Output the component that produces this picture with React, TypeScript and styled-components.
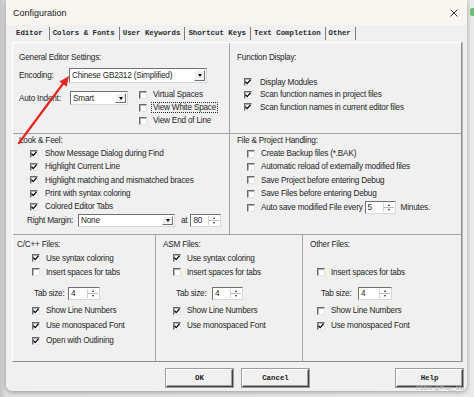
import React from "react";
import styled, { createGlobalStyle } from "styled-components";

const GlobalStyle = createGlobalStyle`
  html, body {
    margin: 0;
    padding: 0;
  }
  body {
    width: 474px;
    height: 397px;
    overflow: hidden;
    background: #e6e6e6;
    font-family: "Liberation Sans", Arial, sans-serif;
    font-size: 8.2px;
    letter-spacing: -0.2px;
    color: #262626;
  }
`;

const Desk = styled.div`
  position: relative;
  width: 474px;
  height: 397px;
  display: flex;
  align-items: flex-start;
  padding-left: 6px;
  box-sizing: border-box;
  background: linear-gradient(to right, #c4c4c4 0, #dedede 6px, #e9e9e9 100%);
`;

const Window = styled.div`
  width: 461px;
  height: 391px;
  background: #f0f0f0;
  border-radius: 0 0 6px 6px;
  box-shadow: 0 1px 4px rgba(0, 0, 0, 0.35);
  display: flex;
  flex-direction: column;
`;

const RightStrip = styled.div`
  flex: 1;
  height: 397px;
  display: flex;
  flex-direction: column;
  align-items: flex-end;
  padding-top: 8px;
  box-sizing: border-box;
`;

const GreenMark = styled.span`
  width: 4px;
  height: 8px;
  border-radius: 2px 0 0 2px;
  background: #6cc070;
`;

const TitleBar = styled.div`
  height: 25px;
  display: flex;
  align-items: center;
  justify-content: space-between;
  padding: 0 9px 0 7px;
  background: #f9f5f0;
  font-size: 9px;
  letter-spacing: 0;
  color: #1a1a1a;
`;

const TabStrip = styled.div`
  height: 17px;
  display: flex;
  align-items: center;
  padding-left: 7px;
`;

const Tab = styled.div<{ $active?: boolean }>`
  height: 13px;
  line-height: 13px;
  padding: 0 ${(p) => (p.$active ? 6 : 4)}px 0 3px;
  border-right: 1px solid #7c7c7c;
  font-family: "Liberation Mono", "Courier New", monospace;
  font-weight: bold;
  font-size: 7.4px;
  letter-spacing: 0;
  color: #2a2a2a;
  white-space: nowrap;
`;

const Panel = styled.div`
  height: 320px;
  margin: 0 5px 0 6px;
  box-sizing: border-box;
  border: 1px solid;
  border-color: #ffffff #8e8e8e #8e8e8e #ffffff;
  box-shadow: 1px 0 0 #b4b4b4;
  display: flex;
  flex-direction: column;
`;

const TopGrid = styled.div`
  display: grid;
  grid-template-columns: 217px 1fr;
  grid-template-rows: 91px 101px;
`;

const BottomGrid = styled.div`
  flex: 1;
  display: grid;
  grid-template-columns: 143px 147px 1fr;
`;

const Section = styled.div<{ $pl: number; $pt: number; $br?: boolean; $bb?: boolean }>`
  box-sizing: border-box;
  padding: ${(p) => p.$pt}px 0 0 ${(p) => p.$pl}px;
  border-right: ${(p) => (p.$br ? "1px solid #a3a3a3" : "none")};
  border-bottom: ${(p) => (p.$bb ? "1px solid #a3a3a3" : "none")};
  display: flex;
  flex-direction: column;
  white-space: nowrap;
`;

const Heading = styled.div`
  line-height: 13px;
  height: 13px;
`;

const Row = styled.div<{ $h: number; $mt?: number; $ml?: number }>`
  display: flex;
  align-items: center;
  height: ${(p) => p.$h}px;
  margin-top: ${(p) => p.$mt ?? 0}px;
  margin-left: ${(p) => p.$ml ?? 0}px;
`;

const Label = styled.span<{ $w?: number; $ml?: number; $mr?: number }>`
  display: inline-block;
  width: ${(p) => (p.$w ? `${p.$w}px` : "auto")};
  margin-left: ${(p) => p.$ml ?? 0}px;
  margin-right: ${(p) => p.$mr ?? 0}px;
  line-height: 13px;
  white-space: nowrap;
`;

const CheckRow = styled.div<{ $indent: number; $h: number; $gap: number }>`
  display: flex;
  align-items: center;
  height: ${(p) => p.$h}px;
  padding-left: ${(p) => p.$indent}px;
  gap: ${(p) => p.$gap}px;
`;

const Box = styled.span`
  width: 8px;
  height: 8px;
  flex: none;
  box-sizing: border-box;
  background: #fff;
  border: 1px solid;
  border-color: #6a6a6a #e4e4e4 #e4e4e4 #6a6a6a;
  box-shadow: inset 1px 1px 0 #b0b0b0;
  display: flex;
  align-items: center;
  justify-content: center;
`;

const CheckText = styled.span<{ $focus?: boolean }>`
  line-height: 9px;
  padding: 0 1px;
  margin-left: ${(p) => (p.$focus ? -1 : 0)}px;
  border: ${(p) => (p.$focus ? "1px dotted #2a2a2a" : "none")};
`;

const Field = styled.div<{ $w: number; $h: number; $ml?: number }>`
  width: ${(p) => p.$w}px;
  height: ${(p) => p.$h}px;
  margin-left: ${(p) => p.$ml ?? 0}px;
  flex: none;
  box-sizing: border-box;
  background: #fff;
  border: 1px solid;
  border-color: #707070 #d8d8d8 #d8d8d8 #707070;
  display: flex;
  align-items: stretch;
`;

const FieldText = styled.span`
  flex: 1;
  padding-left: 2px;
  display: flex;
  align-items: center;
  overflow: hidden;
`;

const DropBtn = styled.span`
  width: 11px;
  margin: 1px;
  box-sizing: border-box;
  background: #f0f0f0;
  border: 1px solid;
  border-color: #ffffff #707070 #707070 #ffffff;
  display: flex;
  align-items: center;
  justify-content: center;
`;

const DownTri = styled.span`
  width: 0;
  height: 0;
  border-left: 2.5px solid transparent;
  border-right: 2.5px solid transparent;
  border-top: 3px solid #000;
`;

const SpinBtns = styled.span`
  width: 10px;
  margin: 1px 1px 1px 2px;
  display: flex;
  flex-direction: column;
  border-left: 1px solid #d0d0d0;
`;

const SpinHalf = styled.span<{ $up?: boolean }>`
  flex: 1;
  display: flex;
  align-items: center;
  justify-content: center;
  border-bottom: ${(p) => (p.$up ? "1px solid #b8b8b8" : "none")};
`;

const SpinTri = styled.span<{ $up?: boolean }>`
  width: 0;
  height: 0;
  border-left: 1.5px solid transparent;
  border-right: 1.5px solid transparent;
  border-top: ${(p) => (p.$up ? "none" : "2px solid #222")};
  border-bottom: ${(p) => (p.$up ? "2px solid #222" : "none")};
`;

const Column = styled.div<{ $mt?: number; $ml?: number }>`
  display: flex;
  flex-direction: column;
  margin-top: ${(p) => p.$mt ?? 0}px;
  margin-left: ${(p) => p.$ml ?? 0}px;
`;

const ButtonRow = styled.div`
  flex: 1;
  display: flex;
  align-items: flex-start;
  padding: 7px 4px 0 160px;
  gap: 9px;
`;

const Button = styled.button<{ $push?: boolean }>`
  width: 67px;
  height: 18px;
  margin-left: ${(p) => (p.$push ? "auto" : "0")};
  box-sizing: border-box;
  padding: 0;
  background: #f0f0f0;
  border: 1px solid;
  border-color: #ffffff #404040 #404040 #ffffff;
  box-shadow: inset -1px -1px 0 #a0a0a0, 0 0 0 1px #9c9c9c;
  font-family: "Liberation Mono", "Courier New", monospace;
  font-weight: bold;
  font-size: 7.4px;
  letter-spacing: 0;
  color: #222;
`;

const Arrow = styled.svg`
  position: absolute;
  left: 0;
  top: 0;
  pointer-events: none;
`;

const Watermark = styled.span`
  position: absolute;
  right: 10px;
  top: 385px;
  font-size: 6px;
  letter-spacing: 0;
  color: #b9b9b9;
`;

const Check: React.FC<{
  checked?: boolean;
  indent: number;
  h: number;
  gap: number;
  focus?: boolean;
  children?: React.ReactNode;
}> = ({ checked, indent, h, gap, focus, children }) => (
  <CheckRow $indent={indent} $h={h} $gap={gap}>
    <Box>
      {checked && (
        <svg width="6" height="6" viewBox="0 0 6 6">
          <path d="M0.5 2.6 L2.2 4.6 L5.6 0.8" stroke="#000" strokeWidth="1.3" fill="none" />
        </svg>
      )}
    </Box>
    <CheckText $focus={focus}>{children}</CheckText>
  </CheckRow>
);

const Combo: React.FC<{ w: number; h: number; ml?: number; value: string }> = ({ w, h, ml, value }) => (
  <Field $w={w} $h={h} $ml={ml}>
    <FieldText>{value}</FieldText>
    <DropBtn>
      <DownTri />
    </DropBtn>
  </Field>
);

const Spinner: React.FC<{ w: number; h: number; ml?: number; value: string }> = ({ w, h, ml, value }) => (
  <Field $w={w} $h={h} $ml={ml}>
    <FieldText>{value}</FieldText>
    <SpinBtns>
      <SpinHalf $up>
        <SpinTri $up />
      </SpinHalf>
      <SpinHalf>
        <SpinTri />
      </SpinHalf>
    </SpinBtns>
  </Field>
);

const tabs = ["Editor", "Colors & Fonts", "User Keywords", "Shortcut Keys", "Text Completion", "Other"];

export default function App() {
  return (
    <Desk>
      <GlobalStyle />
      <Window>
        <TitleBar>
          <span>Configuration</span>
          <svg width="8" height="8" viewBox="0 0 8 8">
            <path d="M0.5 0.5 L7.5 7.5 M7.5 0.5 L0.5 7.5" stroke="#222" strokeWidth="0.9" />
          </svg>
        </TitleBar>
        <TabStrip>
          {tabs.map((t, i) => (
            <Tab key={t} $active={i === 0}>
              {t}
            </Tab>
          ))}
        </TabStrip>
        <Panel>
          <TopGrid>
            {/* General editor settings */}
            <Section $pl={6} $pt={8} $br $bb>
              <Heading>General Editor Settings:</Heading>
              <Row $h={15} $mt={4}>
                <Label $w={50}>Encoding:</Label>
                <Combo w={138} h={15} value="Chinese GB2312 (Simplified)" />
              </Row>
              <Row $h={40} $mt={5} style={{ alignItems: "flex-start" }}>
                <Label $w={51} style={{ marginTop: 4 }}>
                  Auto Indent:
                </Label>
                <Column $mt={3}>
                  <Combo w={58} h={14} value="Smart" />
                </Column>
                <Column $ml={11}>
                  <Check indent={0} h={13} gap={5}>
                    Virtual Spaces
                  </Check>
                  <Check indent={0} h={13} gap={5} focus>
                    View White Space
                  </Check>
                  <Check indent={0} h={13} gap={5}>
                    View End of Line
                  </Check>
                </Column>
              </Row>
            </Section>

            {/* Function display */}
            <Section $pl={7} $pt={8} $bb>
              <Heading>Function Display:</Heading>
              <Column $mt={12}>
                <Check checked indent={7} h={12.6} gap={7}>
                  Display Modules
                </Check>
                <Check checked indent={7} h={12.6} gap={7}>
                  Scan function names in project files
                </Check>
                <Check checked indent={7} h={12.6} gap={7}>
                  Scan function names in current editor files
                </Check>
              </Column>
            </Section>

            {/* Look & feel */}
            <Section $pl={6} $pt={0} $br $bb>
              <Heading>Look &amp; Feel:</Heading>
              <Check checked indent={11} h={13.3} gap={6}>
                Show Message Dialog during Find
              </Check>
              <Check checked indent={11} h={13.3} gap={6}>
                Highlight Current Line
              </Check>
              <Check checked indent={11} h={13.3} gap={6}>
                Highlight matching and mismatched braces
              </Check>
              <Check checked indent={11} h={13.3} gap={6}>
                Print with syntax coloring
              </Check>
              <Check checked indent={11} h={13.3} gap={6}>
                Colored Editor Tabs
              </Check>
              <Row $h={14}>
                <Label $w={51} $ml={8}>
                  Right Margin:
                </Label>
                <Combo w={97} h={13} value="None" />
                <Label $ml={6}>at</Label>
                <Spinner w={31} h={13} ml={3} value="80" />
              </Row>
            </Section>

            {/* File & project handling */}
            <Section $pl={7} $pt={0} $bb>
              <Heading>File &amp; Project Handling:</Heading>
              <Check indent={10} h={13.3} gap={5}>
                Create Backup files (*.BAK)
              </Check>
              <Check indent={10} h={13.3} gap={5}>
                Automatic reload of externally modified files
              </Check>
              <Check indent={10} h={13.3} gap={5}>
                Save Project before entering Debug
              </Check>
              <Check indent={10} h={13.3} gap={5}>
                Save Files before entering Debug
              </Check>
              <Row $h={15}>
                <Check indent={10} h={15} gap={5}>
                  Auto save modified File every
                </Check>
                <Spinner w={31} h={13} ml={1} value="5" />
                <Label $ml={5}>Minutes.</Label>
              </Row>
            </Section>
          </TopGrid>

          <BottomGrid>
            {/* C/C++ */}
            <Section $pl={4} $pt={3} $br>
              <Heading>C/C++ Files:</Heading>
              <Check checked indent={15} h={14} gap={5}>
                Use syntax coloring
              </Check>
              <Check indent={15} h={14} gap={5}>
                Insert spaces for tabs
              </Check>
              <Row $h={16} $mt={6}>
                <Label $w={34} $ml={17}>
                  Tab size:
                </Label>
                <Spinner w={32} h={13} value="4" />
              </Row>
              <Column $mt={2}>
                <Check checked indent={15} h={15} gap={5}>
                  Show Line Numbers
                </Check>
                <Check checked indent={15} h={15} gap={5}>
                  Use monospaced Font
                </Check>
                <Check checked indent={15} h={15} gap={5}>
                  Open with Outlining
                </Check>
              </Column>
            </Section>

            {/* ASM */}
            <Section $pl={7} $pt={3} $br>
              <Heading>ASM Files:</Heading>
              <Check checked indent={10} h={14} gap={5}>
                Use syntax coloring
              </Check>
              <Check indent={10} h={14} gap={5}>
                Insert spaces for tabs
              </Check>
              <Row $h={16} $mt={6}>
                <Label $w={36} $ml={13}>
                  Tab size:
                </Label>
                <Spinner w={31} h={13} value="4" />
              </Row>
              <Column $mt={2}>
                <Check checked indent={10} h={15} gap={5}>
                  Show Line Numbers
                </Check>
                <Check checked indent={10} h={15} gap={5}>
                  Use monospaced Font
                </Check>
              </Column>
            </Section>

            {/* Other */}
            <Section $pl={7} $pt={3}>
              <Heading>Other Files:</Heading>
              <Row $h={14} />
              <Check indent={7} h={14} gap={5}>
                Insert spaces for tabs
              </Check>
              <Row $h={16} $mt={6}>
                <Label $w={37} $ml={11}>
                  Tab size:
                </Label>
                <Spinner w={34} h={13} value="4" />
              </Row>
              <Column $mt={2}>
                <Check indent={7} h={15} gap={5}>
                  Show Line Numbers
                </Check>
                <Check checked indent={7} h={15} gap={5}>
                  Use monospaced Font
                </Check>
              </Column>
            </Section>
          </BottomGrid>
        </Panel>
        <ButtonRow>
          <Button>OK</Button>
          <Button>Cancel</Button>
          <Button $push>Help</Button>
        </ButtonRow>
      </Window>
      <RightStrip>
        <GreenMark />
      </RightStrip>

      <Arrow width="474" height="397" viewBox="0 0 474 397">
        <path d="M19 143 L63.5 83" stroke="#e8261d" strokeWidth="2.2" strokeLinecap="round" fill="none" />
        <polygon points="69,76 66.6,86.8 59.4,81.4" fill="#e8261d" />
      </Arrow>
      <Watermark>CSDN @Pray_Mo</Watermark>
    </Desk>
  );
}
